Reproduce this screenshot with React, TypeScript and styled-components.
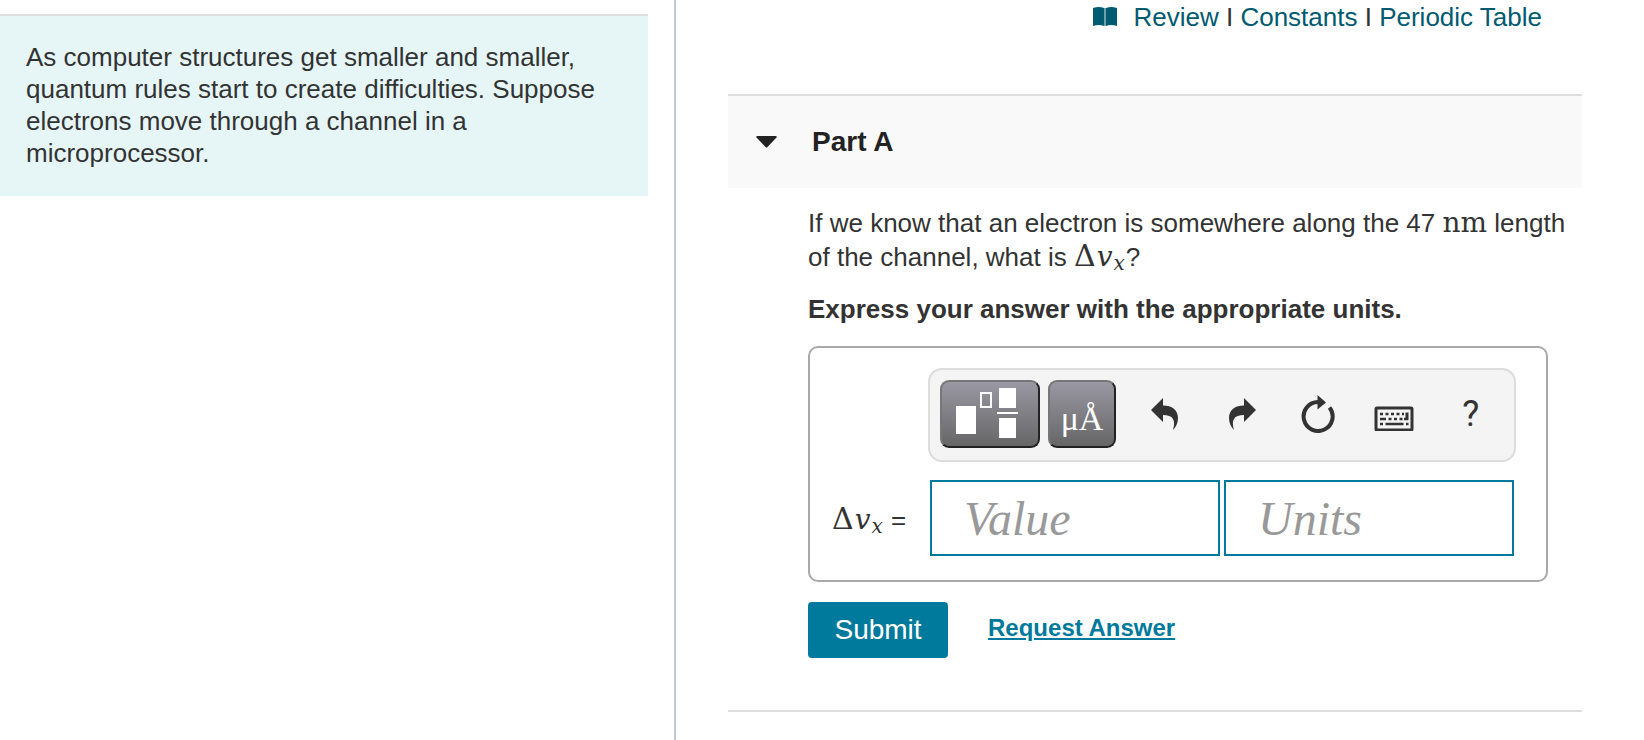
import React from "react";
import styled, { createGlobalStyle } from "styled-components";

const sans = '"Liberation Sans", Arial, Helvetica, sans-serif';
const serif = '"Liberation Serif", "Times New Roman", serif';
const mathSerif = '"DejaVu Serif", "Liberation Serif", serif';

const GlobalStyle = createGlobalStyle`
  *, *::before, *::after { box-sizing: border-box; }
  body {
    margin: 0;
    background: #fff;
    color: #333;
    font-family: ${sans};
    font-size: 26px;
  }
  p, h2 { margin: 0; }
`;

const Page = styled.div`
  display: grid;
  grid-template-columns: 41% minmax(0, 1fr);
  min-height: 100vh;
`;

const ContextPane = styled.aside`
  padding: 14px 26px 0 0;
`;

const ContextCard = styled.div`
  padding: 25px 26px 27px;
  border-top: 2px solid #dedede;
  background: #e6f6f7;
  line-height: 32px;
`;

const ProblemPane = styled.main`
  padding: 0 62px 0 52px;
  border-left: 2px solid #bccbd6;
`;

const Resources = styled.nav`
  display: flex;
  justify-content: flex-end;
  align-items: center;
  height: 94px;
  padding: 0 40px 60px 0;
  line-height: 32px;
  white-space: pre;
`;

const ResourceLink = styled.a`
  color: #005a70;
  text-decoration: none;
`;

const BookIcon = styled.svg`
  flex: none;
  margin-right: 16px;
`;

const PartHeader = styled.header`
  display: flex;
  align-items: center;
  height: 94px;
  padding-left: 28px;
  border-top: 2px solid #dedede;
  background: #f9f9f9;
`;

const Toggle = styled.button`
  display: flex;
  width: 56px;
  padding: 0;
  border: 0;
  background: none;
  cursor: pointer;
`;

const PartTitle = styled.h2`
  color: #222;
  font-size: 28px;
  line-height: 34px;
`;

const PartBody = styled.section`
  display: flex;
  flex-direction: column;
  gap: 18px;
  padding: 18px 0 52px 80px;
  border-bottom: 2px solid #dedede;
  line-height: 34px;
`;

const Instruction = styled.p`
  font-weight: bold;
`;

const MathText = styled.span`
  font-family: ${mathSerif};
  font-size: 28px;
  line-height: 1;
`;

const Delta = styled.span`
  margin-right: 1px;
  font-size: 30px;
  line-height: 0;
`;

const Sub = styled.sub`
  margin: 0 1px;
  font-size: 20px;
  line-height: 0;
  vertical-align: -4px;
`;

const AnswerForm = styled.form`
  display: flex;
  flex-direction: column;
  gap: 20px;
  margin: 2px 34px 0 0;
`;

const AnswerBox = styled.div`
  display: grid;
  grid-template-columns: 96px minmax(0, 1fr);
  row-gap: 18px;
  padding: 20px 30px 24px 22px;
  border: 2px solid #a9a9a9;
  border-radius: 10px;
`;

const Toolbar = styled.div`
  grid-column: 2;
  display: flex;
  gap: 8px;
  padding: 10px 5px 12px 10px;
  border: 2px solid #dcdcdc;
  border-radius: 14px;
  background: #f4f4f4;
`;

const PaletteButton = styled.button<{ $wide?: boolean }>`
  display: flex;
  flex: none;
  align-items: center;
  justify-content: center;
  width: ${(p) => (p.$wide ? 100 : 68)}px;
  height: 68px;
  padding: ${(p) => (p.$wide ? "0 4px 0 0" : "10px 0 0")};
  border: 2px solid;
  border-color: #777 #222 #222 #777;
  border-radius: 9px;
  background: linear-gradient(#9a98a3, #666);
  color: #fff;
  font-family: ${serif};
  font-size: 34px;
`;

const IconTools = styled.div`
  display: flex;
  flex: 1;
  padding-left: 3px;
`;

const IconButton = styled.button`
  display: flex;
  flex: 1;
  align-items: center;
  justify-content: center;
  height: 68px;
  padding: 0;
  border: 0;
  background: none;
  color: #333;
  font-family: Roboto, sans-serif;
  font-size: 36px;
`;

const AnswerLabel = styled.label`
  align-self: center;
  padding-top: 4px;
  white-space: nowrap;
  font-size: 26px;
`;

const Fields = styled.div`
  display: flex;
  gap: 4px;
  padding: 0 2px;
`;

const Field = styled.input`
  flex: 1;
  min-width: 0;
  height: 76px;
  padding: 0 32px;
  border: 2px solid #007a9c;
  border-radius: 0;
  background: #fff;
  color: #333;
  font-family: ${serif};
  font-size: 48px;
  font-style: italic;
  &::placeholder { color: #999; opacity: 1; }
`;

const Actions = styled.div`
  display: flex;
  align-items: center;
  gap: 40px;
`;

const SubmitButton = styled.button`
  width: 140px;
  height: 56px;
  padding: 0;
  border: 0;
  border-radius: 4px;
  background: #007a9c;
  color: #fff;
  font-family: ${sans};
  font-size: 28px;
`;

const RequestLink = styled.a`
  padding-bottom: 4px;
  color: #007a9c;
  font-size: 24px;
  font-weight: bold;
  text-decoration-thickness: 2px;
  text-underline-offset: 2px;
`;

function Velocity() {
  return (
    <MathText>
      <Delta>Δ</Delta>
      <i>v</i>
      <Sub><i>x</i></Sub>
    </MathText>
  );
}

export default function App() {
  return (
    <>
      <GlobalStyle />
      <Page>
        <ContextPane>
          <ContextCard>
            As computer structures get smaller and smaller, quantum rules start to create
            difficulties. Suppose electrons move through a channel in a microprocessor.
          </ContextCard>
        </ContextPane>
        <ProblemPane>
          <Resources>
            <BookIcon width="24" height="20" viewBox="0 0 24 20" aria-hidden="true">
              <path d="M0 1Q6-1 11 1V19Q6 17 0 19ZM13 1Q18-1 24 1V19Q18 17 13 19Z" fill="#005a70" />
              <path d="M12 1V19" stroke="#6f9fac" strokeWidth="2" />
            </BookIcon>
            <ResourceLink href="#review">Review</ResourceLink>
            {" I "}
            <ResourceLink href="#constants">Constants</ResourceLink>
            {" I "}
            <ResourceLink href="#periodic-table">Periodic Table</ResourceLink>
          </Resources>
          <PartHeader>
            <Toggle type="button" aria-label="Collapse Part A" aria-expanded="true">
              <svg width="21" height="12" viewBox="0 0 21 12">
                <path d="M1 0H20Q21 0 20.500 1.500L11.500 11Q10.500 12 9.500 11L.5 1.500Q0 0 1 0Z" fill="#222" />
              </svg>
            </Toggle>
            <PartTitle>Part A</PartTitle>
          </PartHeader>
          <PartBody>
            <p>
              If we know that an electron is somewhere along the 47 <MathText>nm</MathText> length
              of the channel, what is <Velocity />?
            </p>
            <Instruction>Express your answer with the appropriate units.</Instruction>
            <AnswerForm onSubmit={(e) => e.preventDefault()}>
              <AnswerBox>
                <Toolbar role="toolbar" aria-label="Answer tools">
                  <PaletteButton type="button" $wide aria-label="Templates">
                    <svg width="64" height="54" viewBox="0 0 64 54" fill="#fff">
                      <rect x="0" y="19" width="20" height="28" />
                      <rect x="25" y="6" width="10" height="14" fill="none" stroke="#fff" strokeWidth="2" />
                      <rect x="43" y="1" width="17" height="20" />
                      <rect x="41" y="25" width="21" height="2" />
                      <rect x="43" y="31" width="17" height="20" />
                    </svg>
                  </PaletteButton>
                  <PaletteButton type="button" aria-label="Symbols">μÅ</PaletteButton>
                  <IconTools>
                    <IconButton type="button" aria-label="Undo">
                      <svg width="28" height="32" viewBox="0 0 28 32">
                        <path d="M0 12L12 0V7.500C21 7.500 27 12 27 20C27 25 25 29 22 32C25 22 22 17 12 17V24Z" fill="#333" />
                      </svg>
                    </IconButton>
                    <IconButton type="button" aria-label="Redo">
                      <svg width="28" height="32" viewBox="0 0 28 32">
                        <path d="M28 12L16 0V7.500C7 7.500 1 12 1 20C1 25 3 29 6 32C3 22 6 17 16 17V24Z" fill="#333" />
                      </svg>
                    </IconButton>
                    <IconButton type="button" aria-label="Reset">
                      <svg width="34" height="38" viewBox="0 0 34 38">
                        <path d="M17 7A14.500 14.500 0 1 0 28.500 12.500" fill="none" stroke="#333" strokeWidth="4" />
                        <path d="M16.500 0L25 7.500L16.500 14.500Z" fill="#333" />
                      </svg>
                    </IconButton>
                    <IconButton type="button" aria-label="Keyboard">
                      <svg width="40" height="34" viewBox="0 0 40 34" fill="none" stroke="#333">
                        <rect x="2" y="11" width="36" height="22" rx="1" strokeWidth="3" />
                        <path strokeWidth="2.500" d="M6 17H9M11.500 17H14.500M17 17H20M22.500 17H25.500M28 17H30M6 22H12M14.500 22H17.500M20 22H23M25.500 22H28.500M6 27H9M11.500 27H29.500M32 27H34.500M30 22H34" />
                        <path strokeWidth="3" d="M33 15.500V23" />
                      </svg>
                    </IconButton>
                    <IconButton type="button" aria-label="Help">?</IconButton>
                  </IconTools>
                </Toolbar>
                <AnswerLabel htmlFor="answer-value"><Velocity /> =</AnswerLabel>
                <Fields>
                  <Field id="answer-value" type="text" placeholder="Value" />
                  <Field type="text" placeholder="Units" aria-label="Units" />
                </Fields>
              </AnswerBox>
              <Actions>
                <SubmitButton type="submit">Submit</SubmitButton>
                <RequestLink href="#request-answer">Request Answer</RequestLink>
              </Actions>
            </AnswerForm>
          </PartBody>
        </ProblemPane>
      </Page>
    </>
  );
}
